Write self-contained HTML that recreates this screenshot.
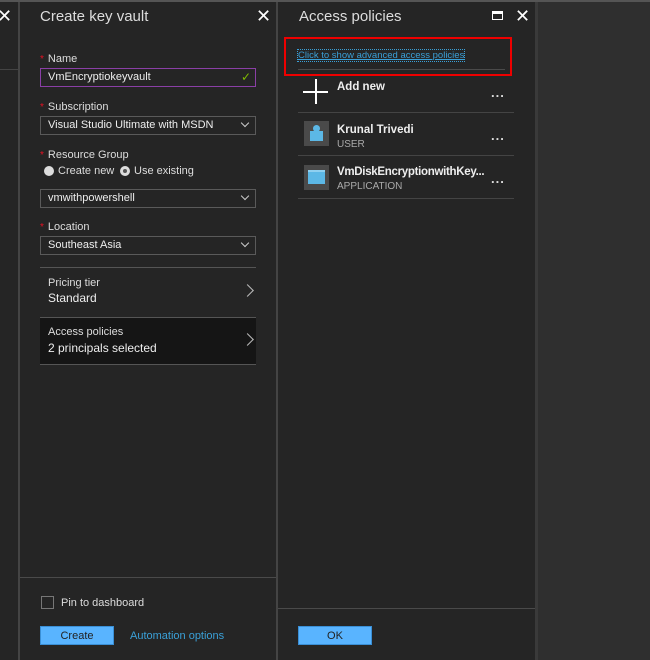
<!DOCTYPE html>
<html><head><meta charset="utf-8"><style>
*{margin:0;padding:0;box-sizing:border-box}
body{width:650px;height:660px;background:#252525;font-family:"Liberation Sans",sans-serif;position:relative;overflow:hidden;color:#ddd}
.a{position:absolute}
.lbl{font-size:11px;color:#ddd}
.star{color:#e81123;font-size:10px;margin-right:4px}
.box{position:absolute;left:40px;width:216px;height:19px;border:1px solid #5a5a5a;font-size:11px;color:#eee;padding:0 7px;line-height:17px;background:#252525}
.chev{position:absolute;right:7px;top:3px;width:6px;height:6px;border-right:1.5px solid #ccc;border-bottom:1.5px solid #ccc;transform:rotate(45deg)}
.rchev{position:absolute;width:9px;height:9px;border-right:1.5px solid #bbb;border-top:1.5px solid #bbb;transform:rotate(45deg)}
.x{position:absolute;font-size:18px;color:#fff;line-height:1}
.dots{position:absolute;color:#ddd;font-size:13px;font-weight:bold;letter-spacing:1px}
.sep{position:absolute;height:1px;background:#444}
.b{position:absolute;font-size:11.5px;font-weight:bold;color:#eee}
</style></head><body>
<div class="a" style="left:0;top:0;width:650px;height:2px;background:#555"></div>
<div class="a" style="left:0;top:69px;width:19px;height:1px;background:#444"></div>
<div class="x" style="left:-3px;top:7px">✕</div>
<div class="a" style="left:18px;top:2px;width:2px;height:658px;background:#444"></div>
<div class="a" style="left:40px;top:8px;font-size:15px;color:#ddd">Create key vault</div>
<div class="x" style="left:256px;top:7px">✕</div>
<div class="a lbl" style="left:40px;top:53px"><span class="star">*</span>Name</div>
<div class="box" style="top:68px;border-color:#8a3fa6">VmEncryptiokeyvault<span style="position:absolute;right:4px;top:0;color:#7fba00;font-size:12px">✓</span></div>
<div class="a lbl" style="left:40px;top:101px"><span class="star">*</span>Subscription</div>
<div class="box" style="top:116px">Visual Studio Ultimate with MSDN<span class="chev"></span></div>
<div class="a lbl" style="left:40px;top:149px"><span class="star">*</span>Resource Group</div>
<div class="a" style="left:44px;top:166px;width:10px;height:10px;border-radius:50%;background:#ddd"></div>
<div class="a lbl" style="left:58px;top:165px">Create new</div>
<div class="a" style="left:120px;top:166px;width:10px;height:10px;border-radius:50%;background:#ddd"><div style="margin:3px;width:4px;height:4px;border-radius:50%;background:#555"></div></div>
<div class="a lbl" style="left:134px;top:165px">Use existing</div>
<div class="box" style="top:189px">vmwithpowershell<span class="chev"></span></div>
<div class="a lbl" style="left:40px;top:221px"><span class="star">*</span>Location</div>
<div class="box" style="top:236px">Southeast Asia<span class="chev"></span></div>
<div class="sep" style="left:40px;top:267px;width:216px;background:#555"></div>
<div class="a lbl" style="left:48px;top:277px">Pricing tier</div>
<div class="a" style="left:48px;top:291px;font-size:12px;color:#eee">Standard</div>
<div class="rchev" style="left:243px;top:286px"></div>
<div class="a" style="left:40px;top:317px;width:216px;height:48px;background:#151515;border-top:1px solid #555;border-bottom:1px solid #555"></div>
<div class="a lbl" style="left:48px;top:326px">Access policies</div>
<div class="a" style="left:48px;top:341px;font-size:12px;color:#eee">2 principals selected</div>
<div class="rchev" style="left:243px;top:335px"></div>
<div class="sep" style="left:20px;top:577px;width:257px;background:#4a4a4a"></div>
<div class="a" style="left:41px;top:596px;width:13px;height:13px;border:1px solid #777"></div>
<div class="a lbl" style="left:61px;top:597px">Pin to dashboard</div>
<div class="a" style="left:40px;top:626px;width:74px;height:19px;background:#59b4ff;border:1px solid #3a8fd6;color:#222;font-size:11px;text-align:center;line-height:19px">Create</div>
<div class="a" style="left:130px;top:630px;font-size:11px;color:#3aa0d8">Automation options</div>
<div class="a" style="left:276px;top:2px;width:2px;height:658px;background:#444"></div>
<div class="a" style="left:299px;top:8px;font-size:15px;color:#ddd">Access policies</div>
<div class="a" style="left:492px;top:11px;width:11px;height:9px;border:1.5px solid #fff;border-top-width:3px"></div>
<div class="x" style="left:515px;top:7px">✕</div>
<div class="a" style="left:284px;top:37px;width:228px;height:39px;border:2px solid #e00"></div>
<div class="a" style="left:298px;top:50px;font-size:9.5px;color:#3aa0d8;text-decoration:underline;outline:1px dotted #3aa0d8">Click to show advanced access policies</div>
<div class="sep" style="left:298px;top:69px;width:207px;background:#4a4a4a"></div>
<div class="a" style="left:303px;top:91px;width:25px;height:2px;background:#fff"></div>
<div class="a" style="left:315px;top:79px;width:2px;height:25px;background:#fff"></div>
<div class="b" style="left:337px;top:81px">Add new</div>
<div class="dots" style="left:491px;top:85px">...</div>
<div class="sep" style="left:298px;top:112px;width:216px"></div>
<div class="a" style="left:304px;top:121px;width:25px;height:25px;background:#4a4a4a"></div>
<div class="a" style="left:313px;top:125px;width:7px;height:7px;border-radius:50%;background:#5cb8e6"></div>
<div class="a" style="left:310px;top:131px;width:13px;height:10px;background:#5cb8e6"></div>
<div class="b" style="left:337px;top:124px">Krunal Trivedi</div>
<div class="a" style="left:337px;top:139px;font-size:10px;color:#aaa">USER</div>
<div class="dots" style="left:491px;top:128px">...</div>
<div class="sep" style="left:298px;top:155px;width:216px"></div>
<div class="a" style="left:304px;top:165px;width:25px;height:25px;background:#4a4a4a"></div>
<div class="a" style="left:308px;top:170px;width:17px;height:14px;background:#5cb8e6;border-top:2px solid #8fd0f0"></div>
<div class="b" style="left:337px;top:166px;letter-spacing:-0.3px">VmDiskEncryptionwithKey...</div>
<div class="a" style="left:337px;top:181px;font-size:10px;color:#aaa">APPLICATION</div>
<div class="dots" style="left:491px;top:171px">...</div>
<div class="sep" style="left:298px;top:198px;width:216px"></div>
<div class="sep" style="left:278px;top:608px;width:257px;background:#4a4a4a"></div>
<div class="a" style="left:298px;top:626px;width:74px;height:19px;background:#59b4ff;border:1px solid #3a8fd6;color:#222;font-size:11px;text-align:center;line-height:19px">OK</div>
<div class="a" style="left:535px;top:2px;width:3px;height:658px;background:#3a3a3a"></div>
<div class="a" style="left:538px;top:2px;width:112px;height:658px;background:#2f2f2f"></div>
</body></html>
